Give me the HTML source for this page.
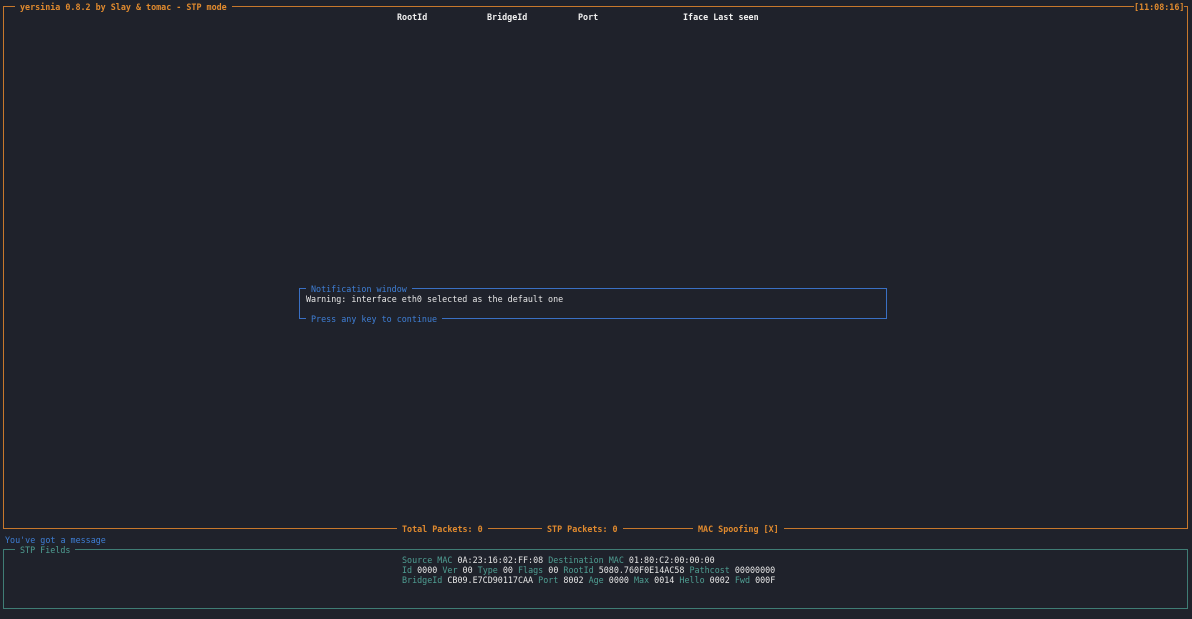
<!DOCTYPE html>
<html><head><meta charset="utf-8"><style>
html,body{margin:0;padding:0;background:#1f222b;width:1192px;height:619px;overflow:hidden}
body{position:relative;font-family:"DejaVu Sans Mono","Liberation Mono",monospace;font-size:8.4px;line-height:10px}
.t{position:absolute;white-space:pre;height:10px}
.box{position:absolute;box-sizing:border-box;border:1px solid}
.o{color:#e08a2e;font-weight:bold}
.w{color:#e6e6e6}
.wb{color:#f0f0f0;font-weight:bold}
.b{color:#3f7fd6}
.g{color:#4f9e92}
.bg{background:#1f222b;padding:0 5px}
</style></head><body>
<div class="box" style="left:3px;top:6px;width:1185px;height:523px;border-color:#c7782c"></div>
<div class="t o bg" style="left:15px;top:2px">yersinia 0.8.2 by Slay &amp; tomac - STP mode</div>
<div class="t o" style="left:1134px;top:2px;background:#1f222b">[11:08:16]</div>
<div class="t wb" style="left:397px;top:12px">RootId</div>
<div class="t wb" style="left:487px;top:12px">BridgeId</div>
<div class="t wb" style="left:578px;top:12px">Port</div>
<div class="t wb" style="left:683px;top:12px">Iface Last seen</div>

<div class="box" style="left:299px;top:288px;width:588px;height:31px;border-color:#3a70c4"></div>
<div class="t b bg" style="left:306px;top:284px">Notification window</div>
<div class="t w" style="left:306px;top:294px">Warning: interface eth0 selected as the default one</div>
<div class="t b bg" style="left:306px;top:314px">Press any key to continue</div>

<div class="t o bg" style="left:397px;top:524px">Total Packets: 0</div>
<div class="t o bg" style="left:542px;top:524px">STP Packets: 0</div>
<div class="t o bg" style="left:693px;top:524px">MAC Spoofing [X]</div>

<div class="t b" style="left:5px;top:535px">You've got a message</div>
<div class="box" style="left:3px;top:549px;width:1185px;height:60px;border-color:#3f7d75"></div>
<div class="t g bg" style="left:15px;top:545px">STP Fields</div>
<div class="t w" style="left:402px;top:555px"><span class="g">Source MAC</span> 0A:23:16:02:FF:08 <span class="g">Destination MAC</span> 01:80:C2:00:00:00</div>
<div class="t w" style="left:402px;top:565px"><span class="g">Id</span> 0000 <span class="g">Ver</span> 00 <span class="g">Type</span> 00 <span class="g">Flags</span> 00 <span class="g">RootId</span> 5080.760F0E14AC58 <span class="g">Pathcost</span> 00000000</div>
<div class="t w" style="left:402px;top:575px"><span class="g">BridgeId</span> CB09.E7CD90117CAA <span class="g">Port</span> 8002 <span class="g">Age</span> 0000 <span class="g">Max</span> 0014 <span class="g">Hello</span> 0002 <span class="g">Fwd</span> 000F</div>
</body></html>
